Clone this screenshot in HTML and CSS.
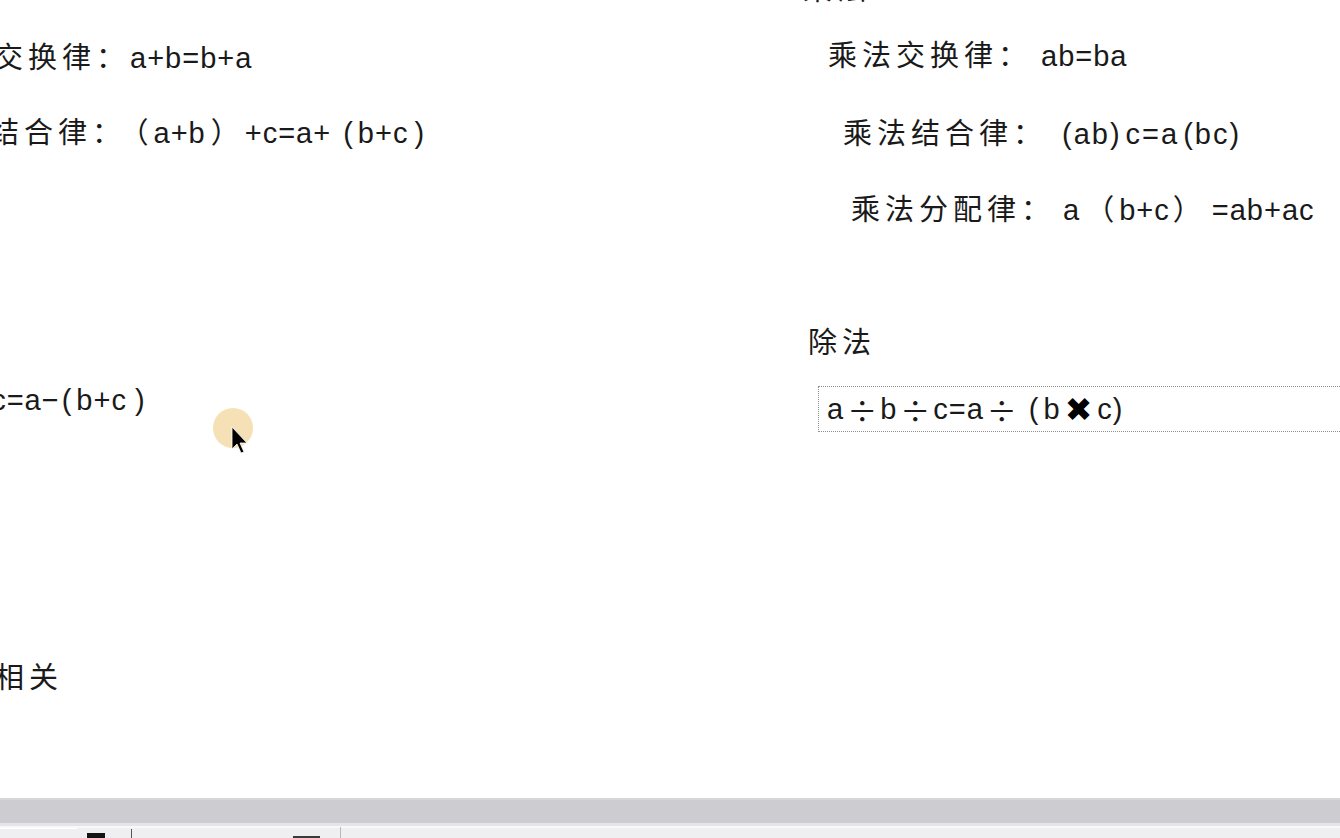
FILE: index.html
```html
<html>
<head>
    <title>运算定律</title>
    <meta charset="utf-8">
    <link rel="stylesheet" href="styles.css">
</head>
<body>
<div class="screen">
    <div class="doc">
        <div class="col col-left">
            <p class="line l1"><span class="zh">加法交换律：</span><span class="en">a+b=b+a</span></p>
            <p class="line l2"><span class="zh">加法结合律：</span><span class="zh gap-8">（</span><span class="en">a+b</span><span class="zh gap-5">）</span><span class="en">+c=a+</span><span class="en gap-12 po">(</span><span class="en">b+c</span><span class="en gap-6">)</span></p>
            <p class="line l3"><span class="en">a−b−c=a−</span><span class="en gap-2 po">(</span><span class="en">b+c</span><span class="en gap-8">)</span></p>
            <p class="line l4"><span class="zh">相关</span></p>
        </div>
        <div class="col col-right">
            <p class="line r0"><span class="zh">乘法</span></p>
            <p class="line r1"><span class="zh">乘法交换律：</span><span class="en gap-9">ab=ba</span></p>
            <p class="line r2"><span class="zh">乘法结合律：</span><span class="en gap-15">(ab)</span><span class="en gap-4">c=a</span><span class="en gap-4">(bc)</span></p>
            <p class="line r3"><span class="zh">乘法分配律：</span><span class="en gap-8">a</span><span class="zh gap-5">（</span><span class="en">b+c</span><span class="zh gap-3">）</span><span class="en gap-5">=ab+ac</span></p>
            <p class="line r4"><span class="zh">除法</span></p>
            <div class="formula-box">
                <span class="en">a</span><span class="op">÷</span><span class="en">b</span><span class="op">÷</span><span class="en">c=a</span><span class="op">÷</span><span class="en gap-9 po">(</span><span class="en">b</span><span class="times">✖</span><span class="en">c)</span>
            </div>
        </div>
    </div>

    <div class="scrollbar"></div>
    <div class="toolbar">
        <div class="tb-tab"></div>
        <div class="tb-block"></div>
        <div class="tb-sep"></div>
        <div class="tb-knob"></div>
        <div class="tb-sep light"></div>
    </div>

    <!-- mouse pointer with click highlight -->
    <svg class="cursor" width="50" height="60" viewBox="0 0 50 60">
        <circle cx="21" cy="20" r="20" fill="#f5e1b5"/>
        <path d="M20 19 L20 41 L25 36 L29 45 L32 44 L28 35 L35 35 Z" fill="#000" stroke="#fff" stroke-width="0.8"/>
    </svg>
</div>
</body>
</html>
```

FILE: styles.css
```css
html, body {
    margin: 0;
    padding: 0;
    overflow: hidden;
    background: #ffffff;
}

.screen {
    position: relative;
    width: 1340px;
    height: 838px;
    overflow: hidden;
    color: #1a1a1a;
}

.doc {
    display: flex;
    height: 800px;
    overflow: hidden;
    border-bottom: 2px solid #d7d7d9;
    box-sizing: border-box;
}

.col {
    display: flex;
    flex-direction: column;
}

.col-left {
    width: 800px;
    flex-shrink: 0;
}

.col-right {
    flex: 1;
    min-width: 0;
}

.line {
    margin: 0;
    height: 40px;
    line-height: 40px;
    white-space: nowrap;
}

.zh {
    font-family: "Noto Sans CJK SC", sans-serif;
    font-size: 29px;
    letter-spacing: 5px;
}

.en {
    font-family: "Liberation Sans", Arial, sans-serif;
    font-size: 29px;
    letter-spacing: 1px;
}

/* small hand-set gaps between mixed glyphs */
.gap-2 { margin-left: 2px; }
.gap-3 { margin-left: 3px; }
.gap-4 { margin-left: 4px; }
.gap-5 { margin-left: 5px; }
.gap-6 { margin-left: 6px; }
.gap-8 { margin-left: 8px; }
.gap-9 { margin-left: 9px; }
.gap-12 { margin-left: 12px; }
.gap-15 { margin-left: 15px; }
.po { margin-right: 4px; }

/* left column, partly scrolled out of view */
.l1 { margin: 35px 0 0 -74px; }
.l2 { margin: 35px 0 0 -78px; }
.l3 { margin: 230px 0 0 -79px; }
.l4 { margin: 235px 0 0 -5px; }

/* right column */
.r0 { margin: -33px 0 0 3px; }
.r1 { margin: 26px 0 0 28px; }
.r2 { margin: 38px 0 0 43px; }
.r3 { margin: 36px 0 0 51px; }
.r4 { margin: 93px 0 0 8px; }

.r2 .en { letter-spacing: 2px; }

.formula-box {
    margin: 26px 0 0 18px;
    width: 700px;
    height: 46px;
    box-sizing: border-box;
    border: 1px dotted #8e8e8e;
    padding-left: 8px;
    white-space: nowrap;
    display: flex;
    align-items: center;
}

.op {
    font-family: "Noto Sans CJK SC", sans-serif;
    font-size: 30px;
    margin: 0 3px;
}

.times {
    font-family: "DejaVu Sans", sans-serif;
    font-size: 33px;
    margin: 0 5px 0 4px;
    color: #000;
}

.scrollbar {
    height: 23px;
    background: #cdccd0;
    border-bottom: 3px solid #e5e4e8;
}

.toolbar {
    display: flex;
    align-items: flex-end;
    height: 12px;
    background: #efeef1;
    border-top: 2px solid #f8f8fa;
    box-sizing: border-box;
}

.tb-tab {
    width: 77px;
    height: 10px;
    border-top: 1px solid #ffffff;
    align-self: flex-start;
}

.tb-block {
    width: 18px;
    height: 5px;
    background: #141414;
    margin-left: 10px;
}

.tb-sep {
    width: 1px;
    height: 9px;
    background: #555555;
    margin-left: 26px;
}

.tb-knob {
    width: 27px;
    height: 2px;
    background: #3a3a3a;
    margin-left: 161px;
}

.tb-sep.light {
    background: #b8b8bb;
    height: 11px;
    margin-left: 20px;
}

.cursor {
    position: absolute;
    left: 212px;
    top: 408px;
}
```
